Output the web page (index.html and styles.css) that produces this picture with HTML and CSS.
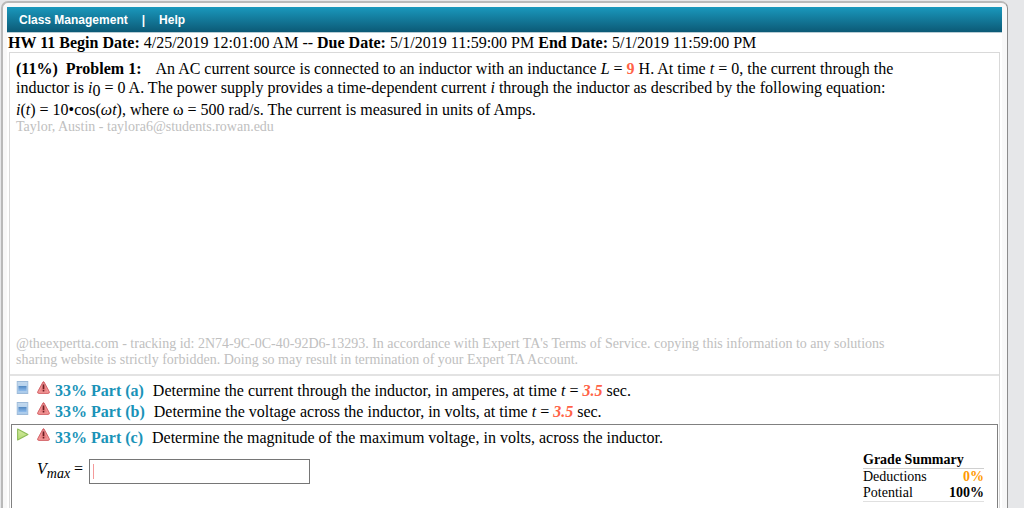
FILE: index.html
```html
<!DOCTYPE html>
<html lang="en">
<head>
<meta charset="utf-8">
<title>HW 11</title>
<link rel="stylesheet" href="styles.css">
</head>
<body>
<svg class="defs" width="0" height="0" aria-hidden="true">
  <defs>
    <linearGradient id="blue" x1="0" y1="0" x2="0" y2="1"><stop offset="0" stop-color="#c3d9ee"/><stop offset="1" stop-color="#a9caeb"/></linearGradient>
    <linearGradient id="bar" x1="0" y1="0" x2="0" y2="1"><stop offset="0" stop-color="#4f86c0"/><stop offset="1" stop-color="#8fbcec"/></linearGradient>
    <linearGradient id="red" x1="0" y1="0" x2="0" y2="1"><stop offset="0" stop-color="#d9666a"/><stop offset="1" stop-color="#f08a8a"/></linearGradient>
    <linearGradient id="green" x1="0" y1="0" x2="0" y2="1"><stop offset="0" stop-color="#d3eaa0"/><stop offset="1" stop-color="#b4dc74"/></linearGradient>
    <symbol id="square" viewBox="0 0 12 13"><rect x=".5" y=".5" width="11" height="12" fill="url(#blue)" stroke="#9dbad8"/><rect x="2" y="5" width="8" height="5" fill="url(#bar)"/></symbol>
    <symbol id="warn" viewBox="0 0 13 13"><path d="M6 .9Q6.5.4 7 .9L12.2 10.6Q12.9 12.4 11.4 12.4H1.6Q.1 12.4.8 10.6Z" fill="url(#red)" stroke="#d4676c" stroke-linejoin="round"/><path d="M6.5 2.4 11.1 11H1.9Z" fill="none" stroke="#f3a3a3" stroke-width=".7"/><path d="M5.7 3.6h1.6v4.6H5.7zM5.7 9h1.6v1.5H5.7z" fill="#6b1d22"/></symbol>
    <symbol id="play" viewBox="0 0 12 12"><path d="M1.5 1 11 6 1.5 11Z" fill="url(#green)" stroke="#8dbb58" stroke-linejoin="round"/></symbol>
  </defs>
</svg>
<div class="frame">
  <nav class="menu">
    <a href="#">Class Management</a><span class="divider">|</span><a href="#">Help</a>
  </nav>
  <header class="dates"><b>HW 11 Begin Date:</b> 4/25/2019 12:01:00 AM -- <b>Due Date:</b> 5/1/2019 11:59:00 PM <b>End Date:</b> 5/1/2019 11:59:00 PM</header>
  <main class="panel">
    <section class="problem">
      <div class="statement">
        <p class="line"><b class="title">(11%)&nbsp; Problem 1:</b>An AC current source is connected to an inductor with an inductance <i>L</i> = <b class="value">9</b> H. At time <i>t</i> = 0, the current through the</p>
        <p class="line">inductor is <i>i</i><sub>0</sub> = 0 A. The power supply provides a time-dependent current <i>i</i> through the inductor as described by the following equation:</p>
        <p class="line equation"><i>i</i>(<i>t</i>) = 10•cos(<i>ωt</i>), where ω = 500 rad/s. The current is measured in units of Amps.</p>
      </div>
      <p class="mark">Taylor, Austin - taylora6@students.rowan.edu</p>
      <p class="mark notice">@theexpertta.com - tracking id: 2N74-9C-0C-40-92D6-13293. In accordance with Expert TA's Terms of Service. copying this information to any solutions sharing website is strictly forbidden. Doing so may result in termination of your Expert TA Account.</p>
    </section>
    <section class="parts">
      <div class="part"><svg class="icon" viewBox="0 0 12 13"><use href="#square"/></svg><svg class="icon" viewBox="0 0 13 13"><use href="#warn"/></svg><b class="part-name">33% Part (a)</b><span>Determine the current through the inductor, in amperes, at time <i>t</i> = <i class="value">3.5</i> sec.</span></div>
      <div class="part"><svg class="icon" viewBox="0 0 12 13"><use href="#square"/></svg><svg class="icon" viewBox="0 0 13 13"><use href="#warn"/></svg><b class="part-name">33% Part (b)</b><span>Determine the voltage across the inductor, in volts, at time <i>t</i> = <i class="value">3.5</i> sec.</span></div>
    </section>
    <section class="current">
      <div class="part"><svg class="icon" viewBox="0 0 12 12"><use href="#play"/></svg><svg class="icon" viewBox="0 0 13 13"><use href="#warn"/></svg><b class="part-name">33% Part (c)</b><span>Determine the magnitude of the maximum voltage, in volts, across the inductor.</span></div>
      <div class="work">
        <div class="answer">
          <label for="vmax"><i>V<sub>max</sub></i> =</label>
          <div class="field"><input id="vmax" type="text"><span class="caret"></span></div>
        </div>
        <table class="grades">
          <caption>Grade Summary</caption>
          <tbody>
            <tr><th scope="row">Deductions</th><td class="deduction">0%</td></tr>
            <tr><th scope="row">Potential</th><td>100%</td></tr>
          </tbody>
        </table>
      </div>
    </section>
  </main>
</div>
</body>
</html>
```

FILE: styles.css
```css
* { box-sizing: border-box; }
html, body { height: 100%; }
body {
  margin: 0;
  padding: 1px 16px 0 1px;
  overflow: hidden;
  background: #e6e7e9;
  color: #000;
  font: 16px/20px "Liberation Serif", "Times New Roman", serif;
}
p { margin: 0; }
.defs { position: absolute; }
.frame {
  display: flex;
  flex-direction: column;
  min-height: 100%;
  padding: 4px 5px 0 4px;
  border: 2px solid #b9b9b9;
  border-right: 1px solid #8c8c8c;
  border-bottom: 0;
  border-radius: 7px 7px 0 0;
  background: #f8f8f8;
}
.menu {
  display: flex;
  align-items: center;
  gap: 14px;
  height: 26px;
  padding: 0 12px;
  border-bottom: 1px solid #b7ccd4;
  background: linear-gradient(#1a98bd, #0c5a76);
  color: #fff;
  font: bold 12px/16px "Liberation Sans", Arial, sans-serif;
}
.menu a { color: inherit; text-decoration: none; }
.dates { padding-left: 1px; background: #fff; line-height: 19px; }
.panel {
  display: flex;
  flex: 1;
  flex-direction: column;
  margin: 0 2px;
  padding: 0 1px;
  border: solid #d9d9d9;
  border-width: 1px 1px 0;
  background: #fff;
  box-shadow: 2px 0 #fff, -2px 0 #fff;
}
.problem {
  display: flex;
  flex-direction: column;
  min-height: 323px;
  margin: 0 -1px;
  padding: 6px;
  border-bottom: 2px solid #e3e3e3;
}
.line { line-height: 19px; }
.line sub { line-height: 0; vertical-align: -3px; font-size: 16px; }
.equation { margin-top: 3px; }
.title { margin-right: 14px; }
.value { color: #ff6347; font-weight: bold; }
.mark { color: #c0c0c0; font-size: 14px; line-height: 16px; }
.notice { max-width: 900px; margin-top: auto; }
.parts { padding: 4px 5px 2px; }
.part { display: flex; gap: 8px; line-height: 21px; }
.icon { flex: none; width: 13px; height: 13px; margin-top: 1px; }
.part-name { margin: 0 1px 0 -3px; color: #1a93b8; }
.current {
  flex: 1;
  padding: 2px 13px 0 4px;
  border: 1px solid #808080;
  border-bottom: 0;
}
.work { display: flex; justify-content: space-between; padding-left: 21px; }
.answer { display: flex; align-items: flex-start; gap: 6px; padding-top: 11px; }
.answer sub { font-size: 14px; line-height: 0; }
.field { display: grid; align-items: center; }
.field > * { grid-area: 1 / 1; }
.field input { width: 221px; height: 25px; padding: 0 6px; border: 1px solid #767676; font: inherit; }
.caret { width: 1px; height: 15px; margin-left: 4px; background: #f49a9a; }
.grades { width: 121px; margin-top: 4px; border-collapse: collapse; font-size: 14px; line-height: 16px; }
.grades caption { border-bottom: 1px solid #d0d0d0; font-weight: bold; text-align: left; }
.grades th, .grades td { padding: 0; }
.grades th { font-weight: normal; text-align: left; }
.grades td { font-weight: bold; text-align: right; }
.grades .deduction { color: #ff9900; }
.grades tbody { border-bottom: 1px solid #e0e0e0; }
```
